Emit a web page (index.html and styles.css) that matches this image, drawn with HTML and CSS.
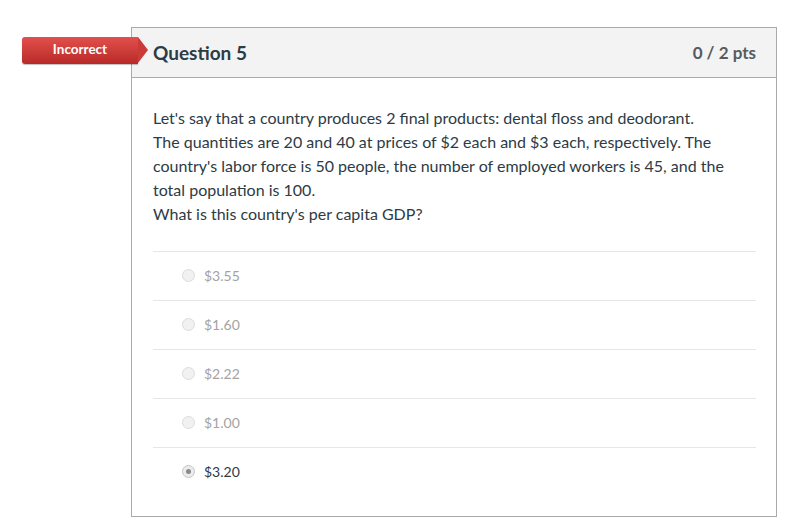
FILE: index.html
```html
<!DOCTYPE html>
<html>
<head>
<meta charset="utf-8">
<link rel="stylesheet" href="styles.css">
</head>
<body>
<div class="page">
  <div class="card">
    <div class="badge">Incorrect</div>
    <div class="card-header">
      <h2 class="q-title">Question 5</h2>
      <span class="q-points">0 / 2 pts</span>
    </div>
    <div class="card-body">
      <div class="q-text">
        Let's say that a country produces 2 final products: dental floss and deodorant.<br>
        The quantities are 20 and 40 at prices of $2 each and $3 each, respectively. The country's labor force is 50 people, the number of employed workers is 45, and the total population is 100.<br>
        What is this country's per capita GDP?
      </div>
      <div class="answers">
        <div class="answer"><span class="radio"></span><span class="a-text">$3.55</span></div>
        <div class="answer"><span class="radio"></span><span class="a-text">$1.60</span></div>
        <div class="answer"><span class="radio"></span><span class="a-text">$2.22</span></div>
        <div class="answer"><span class="radio"></span><span class="a-text">$1.00</span></div>
        <div class="answer selected"><span class="radio"></span><span class="a-text">$3.20</span></div>
      </div>
    </div>
  </div>
</div>
</body>
</html>
```
FILE: styles.css
```css
html, body {
  margin: 0;
  padding: 0;
  background: #ffffff;
}
body {
  font-family: Lato, "Open Sans", sans-serif;
  color: #2d3b45;
}
.page {
  padding: 27px 0 0 131px;
}
.card {
  position: relative;
  width: 644px;
  height: 488px;
  border: 1px solid #aaaaaa;
  background: #fff;
}
.badge {
  position: absolute;
  left: -110px;
  top: 9px;
  width: 116px;
  height: 27px;
  background: linear-gradient(#e2504c, #b82a28);
  border-radius: 3px 0 0 3px;
  color: #fff;
  font-weight: 700;
  font-size: 13.5px;
  line-height: 25px;
  text-align: center;
  box-shadow: 0 1px 1px rgba(0,0,0,0.25);
}
.badge::after {
  content: "";
  position: absolute;
  right: -10px;
  top: 0;
  border-top: 13.5px solid transparent;
  border-bottom: 13.5px solid transparent;
  border-left: 10px solid #cc3a37;
}
.card-header {
  height: 49px;
  background: #f3f3f3;
  border-bottom: 1px solid #aaaaaa;
  display: flex;
  align-items: center;
  justify-content: space-between;
  padding: 0 20px 0 21px;
}
.q-title {
  margin: 0;
  font-size: 19px;
  font-weight: 700;
  color: #2d3b45;
}
.q-points {
  font-size: 17px;
  font-weight: 700;
  color: #555b60;
}
.card-body {
  padding: 28px 20px 0 21px;
}
.q-text {
  font-size: 16px;
  line-height: 24px;
  color: #2d3b45;
}
.answers {
  margin-top: 25px;
}
.answer {
  height: 49px;
  box-sizing: border-box;
  border-top: 1px solid #e6e6e6;
  display: flex;
  align-items: center;
  padding-left: 29px;
  padding-bottom: 1px;
}
.radio {
  width: 11px;
  height: 11px;
  border-radius: 50%;
  border: 1px solid #dcdcdc;
  background: #f1f1f1;
  margin-right: 9px;
  position: relative;
}
.answer.selected .radio {
  border-color: #c5c5c5;
  background: #ececec;
}
.answer.selected .radio::after {
  content: "";
  position: absolute;
  left: 3px;
  top: 3px;
  width: 5px;
  height: 5px;
  border-radius: 50%;
  background: #8a8a8a;
}
.a-text {
  font-size: 14px;
  color: #a3a3a3;
}
.answer.selected .a-text {
  color: #2d3b45;
}
```
